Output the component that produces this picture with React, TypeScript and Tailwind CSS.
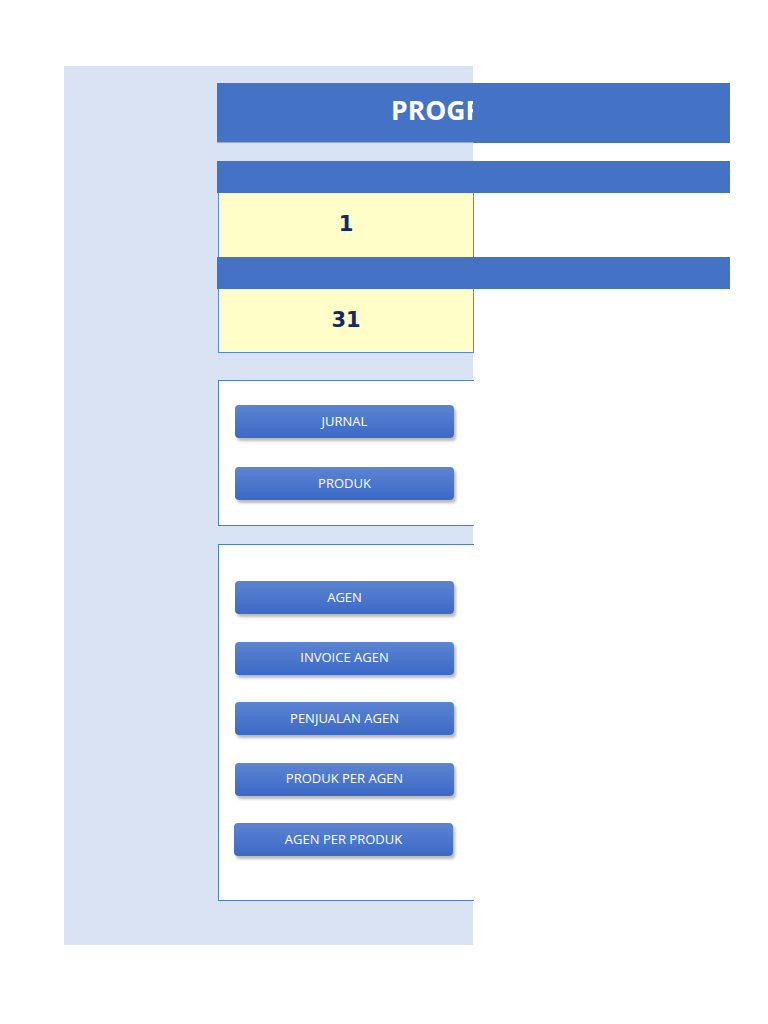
import React from "react";

const btnCls =
  "flex h-[33px] w-[219px] items-center justify-center rounded-[4px] bg-gradient-to-b from-[#5C84D2] to-[#3B69C6] text-[13px] text-white shadow-[2px_3px_3px_rgba(0,0,0,0.28)]";

function Btn({ label, extra = "" }: { label: string; extra?: string }) {
  return (
    <div className={`${btnCls} ${extra}`} style={{ fontFamily: '"Open Sans", sans-serif' }}>
      {label}
    </div>
  );
}

export default function App() {
  return (
    <div className="min-h-[1024px] w-[768px] bg-white pl-[64px] pt-[66px]">
      <div className="flex h-[879px] w-[409px] flex-col bg-[#DAE3F3] pl-[153px] pt-[17px]">
        {/* Title bar */}
        <div className="flex h-[60px] w-[513px] shrink-0 bg-[#4472C4]">
          <div className="flex h-[60px] w-[256px] shrink-0 items-center overflow-hidden border-b border-[#8FAADC] pb-[4px] pl-[174px]">
            <span
              className="whitespace-nowrap text-[26.5px] font-bold text-white"
              style={{ fontFamily: '"Open Sans", sans-serif' }}
            >
              PROGRAM
            </span>
          </div>
          <div className="flex-1" />
        </div>
        {/* white gap to the right of panel */}
        <div className="flex h-[18px] w-[513px] shrink-0">
          <div className="w-[256px]" />
          <div className="flex-1 bg-white" />
        </div>
        {/* bar 2 */}
        <div className="h-[32px] w-[513px] shrink-0 bg-[#4472C4]" />
        <div className="ml-[1px] flex h-[64px] w-[256px] shrink-0 items-center justify-center border-x border-[#5B86D6] bg-[#FFFDC8]">
          <span
            className="text-[21px] font-bold text-[#0F2A66]"
            style={{ fontFamily: '"DejaVu Sans", sans-serif' }}
          >
            1
          </span>
        </div>
        {/* bar 3 */}
        <div className="h-[32px] w-[513px] shrink-0 bg-[#4472C4]" />
        <div className="ml-[1px] flex h-[64px] w-[256px] shrink-0 items-center justify-center border-x border-b border-[#5B86D6] bg-[#FFFDC8]">
          <span
            className="text-[21px] font-bold text-[#0F2A66]"
            style={{ fontFamily: '"DejaVu Sans", sans-serif' }}
          >
            31
          </span>
        </div>

        {/* Box 1 */}
        <div className="ml-[1px] mt-[27px] flex h-[146px] w-[256px] shrink-0 flex-col gap-[29px] border-y border-l border-[#4F7DD4] bg-white pl-[16px] pt-[24px]">
          <Btn label="JURNAL" />
          <Btn label="PRODUK" />
        </div>

        {/* Box 2 */}
        <div className="ml-[1px] mt-[18px] flex h-[357px] w-[256px] shrink-0 flex-col gap-[27.5px] border-y border-l border-[#4F7DD4] bg-white pl-[16px] pt-[36px]">
          <Btn label="AGEN" />
          <Btn label="INVOICE AGEN" />
          <Btn label="PENJUALAN AGEN" />
          <Btn label="PRODUK PER AGEN" />
          <Btn label="AGEN PER PRODUK" extra="-ml-[1px]" />
        </div>
      </div>
    </div>
  );
}
